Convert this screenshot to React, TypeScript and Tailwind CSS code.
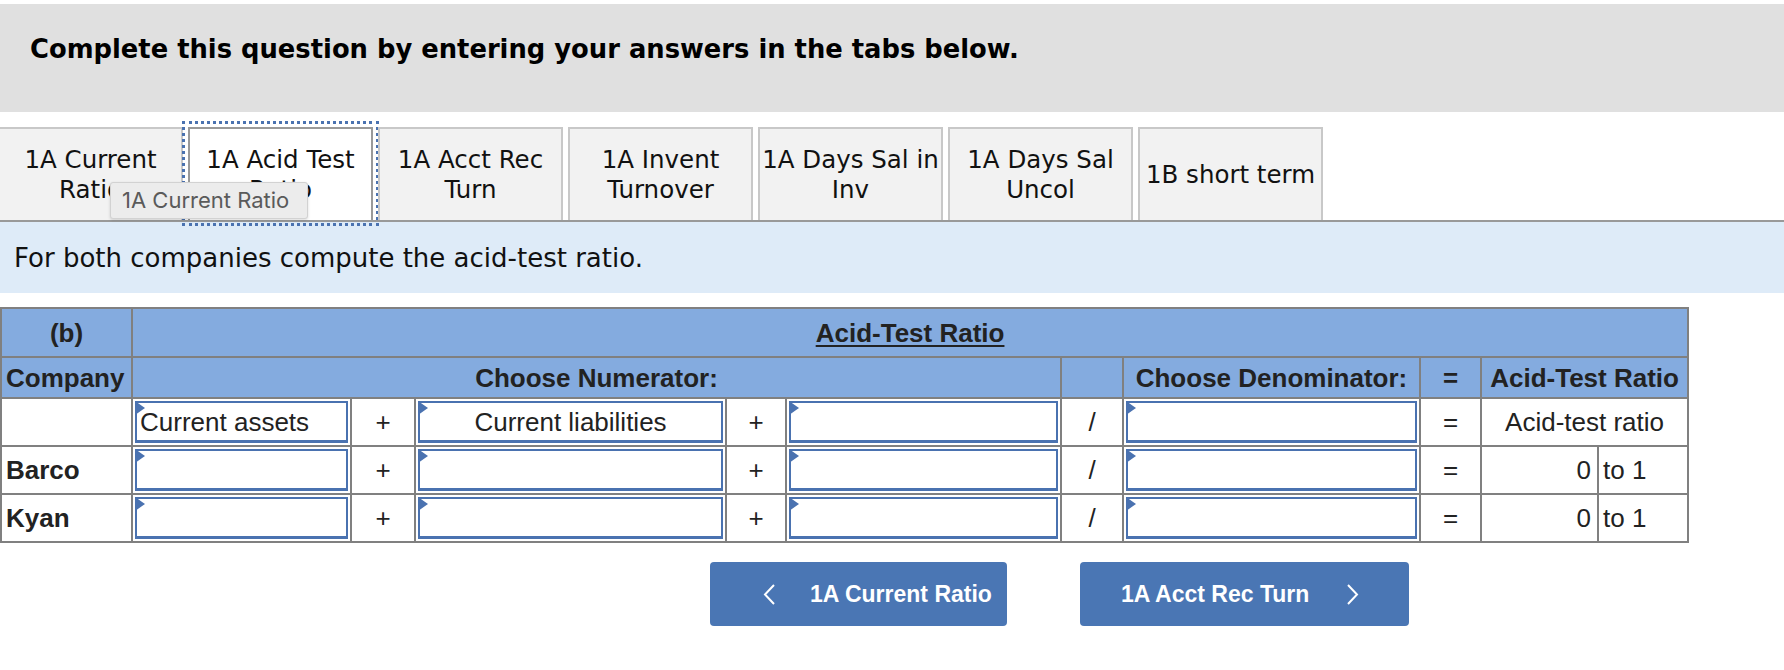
import { ReactNode } from "react";

const tabs = [
  { lines: ["1A Current", "Ratio"] },
  { lines: ["1A Acid Test", "Ratio"], active: true },
  { lines: ["1A Acct Rec", "Turn"] },
  { lines: ["1A Invent", "Turnover"] },
  { lines: ["1A Days Sal in", "Inv"] },
  { lines: ["1A Days Sal", "Uncol"] },
  { lines: ["1B short term"] },
];

const cell = "border-2 border-[#808080] p-0";

const Box = ({ children, align = "left" }: { children?: ReactNode; align?: "left" | "center" }) => (
  <div
    className={`relative h-[42px] m-[2px] border-2 border-b-[3px] border-[#4a72b0] bg-white flex items-center ${
      align === "center" ? "justify-center" : "justify-start pl-[3px]"
    }`}
  >
    <span className="absolute -left-[2px] -top-[2px] w-0 h-0 border-y-[7px] border-y-transparent border-l-[10px] border-l-[#4a72b0]" />
    {children}
  </div>
);

const Row = ({ name, first }: { name?: string; first?: boolean }) => (
  <tr className="h-[48px]">
    <td className={`${cell} pl-[4px] font-bold`}>{name}</td>
    <td className={cell}>
      <Box>{first ? "Current assets" : null}</Box>
    </td>
    <td className={`${cell} text-center`}>+</td>
    <td className={cell}>
      <Box align="center">{first ? "Current liabilities" : null}</Box>
    </td>
    <td className={`${cell} text-center`}>+</td>
    <td className={cell}>
      <Box />
    </td>
    <td className={`${cell} text-center`}>/</td>
    <td className={cell}>
      <Box />
    </td>
    <td className={`${cell} text-center`}>=</td>
    {first ? (
      <td colSpan={2} className={`${cell} text-center`}>
        Acid-test ratio
      </td>
    ) : (
      <>
        <td className={`${cell} text-right pr-[6px]`}>0</td>
        <td className={`${cell} text-left pl-[4px]`}>to 1</td>
      </>
    )}
  </tr>
);

const App = () => {
  return (
    <div className="relative w-[1784px] h-[670px] bg-white overflow-hidden font-['DejaVu_Sans',Verdana,sans-serif] text-[#111]">
      <div className="mt-[4px] h-[108px] bg-[#e0e0e0] pl-[30px] pt-[30px]">
        <h1 className="text-[25.8px] leading-[30px] font-bold text-black">
          Complete this question by entering your answers in the tabs below.
        </h1>
      </div>

      <div className="mt-[15px] flex gap-[5px] -ml-[2px] border-b-2 border-[#999]">
        {tabs.map((tab) => (
          <div
            key={tab.lines[0]}
            className={`relative w-[185px] h-[93px] border-2 border-b-0 flex flex-col items-center justify-center text-[24.5px] leading-[30px] whitespace-nowrap ${
              tab.active
                ? "bg-white border-[#999] outline-[3px] outline-dotted outline-[#4a72b0] outline-offset-[3px]"
                : "bg-[#f2f2f2] border-[#c8c8c8]"
            }`}
          >
            {tab.lines.map((l) => (
              <span key={l}>{l}</span>
            ))}
          </div>
        ))}
      </div>

      <div className="h-[71px] bg-[#deebf8] pl-[14px] pt-[21px]">
        <p className="text-[26px] leading-[30px]">For both companies compute the acid-test ratio.</p>
      </div>

      <div className="mt-[14px]">
        <table className="table-fixed border-collapse w-[1687px] font-['Liberation_Sans',Arial,sans-serif] text-[26px] leading-[30px] text-[#222]">
          <colgroup>
            <col className="w-[131px]" />
            <col className="w-[219px]" />
            <col className="w-[64px]" />
            <col className="w-[311px]" />
            <col className="w-[60px]" />
            <col className="w-[275px]" />
            <col className="w-[62px]" />
            <col className="w-[297px]" />
            <col className="w-[61px]" />
            <col className="w-[117px]" />
            <col className="w-[90px]" />
          </colgroup>
          <thead>
            <tr className="h-[49px] bg-[#84abdf] font-bold">
              <th className={`${cell} text-center`}>(b)</th>
              <th colSpan={10} className={`${cell} text-center`}>
                <span className="underline underline-offset-[3px]">Acid-Test Ratio</span>
              </th>
            </tr>
            <tr className="h-[41px] bg-[#84abdf] font-bold">
              <th className={`${cell} text-left pl-[4px]`}>Company</th>
              <th colSpan={5} className={`${cell} text-center`}>
                Choose Numerator:
              </th>
              <th className={cell}></th>
              <th className={`${cell} text-center`}>Choose Denominator:</th>
              <th className={`${cell} text-center`}>=</th>
              <th colSpan={2} className={`${cell} text-center`}>
                Acid-Test Ratio
              </th>
            </tr>
          </thead>
          <tbody>
            <Row first />
            <Row name="Barco" />
            <Row name="Kyan" />
          </tbody>
        </table>
      </div>

      <div className="mt-[19px] ml-[710px] flex gap-[73px] font-['Liberation_Sans',Arial,sans-serif] text-[23px] font-bold text-white">
        <button className="w-[297px] h-[64px] rounded-[4px] bg-[#4a76b4] flex items-center pl-[53px] gap-[35px]">
          <svg width="12" height="21" viewBox="0 0 12 21" fill="none" stroke="white" strokeWidth="2">
            <path d="M11 1 L2 10.5 L11 20" />
          </svg>
          <span>1A Current Ratio</span>
        </button>
        <button className="w-[329px] h-[64px] rounded-[4px] bg-[#4a76b4] flex items-center pl-[41px] gap-[38px]">
          <span>1A Acct Rec Turn</span>
          <svg width="12" height="21" viewBox="0 0 12 21" fill="none" stroke="white" strokeWidth="2">
            <path d="M1 1 L10 10.5 L1 20" />
          </svg>
        </button>
      </div>

      <div className="absolute left-[110px] top-[182px] w-[198px] h-[37px] bg-[#ececec] border border-[#d2d2d2] rounded-[3px] shadow-[0_1px_3px_rgba(0,0,0,0.15)] flex items-center pl-[11px] font-['Inter',sans-serif] text-[22px] text-[#5a5a5a] whitespace-nowrap">
        1A Current Ratio
      </div>
    </div>
  );
};

export default App;
